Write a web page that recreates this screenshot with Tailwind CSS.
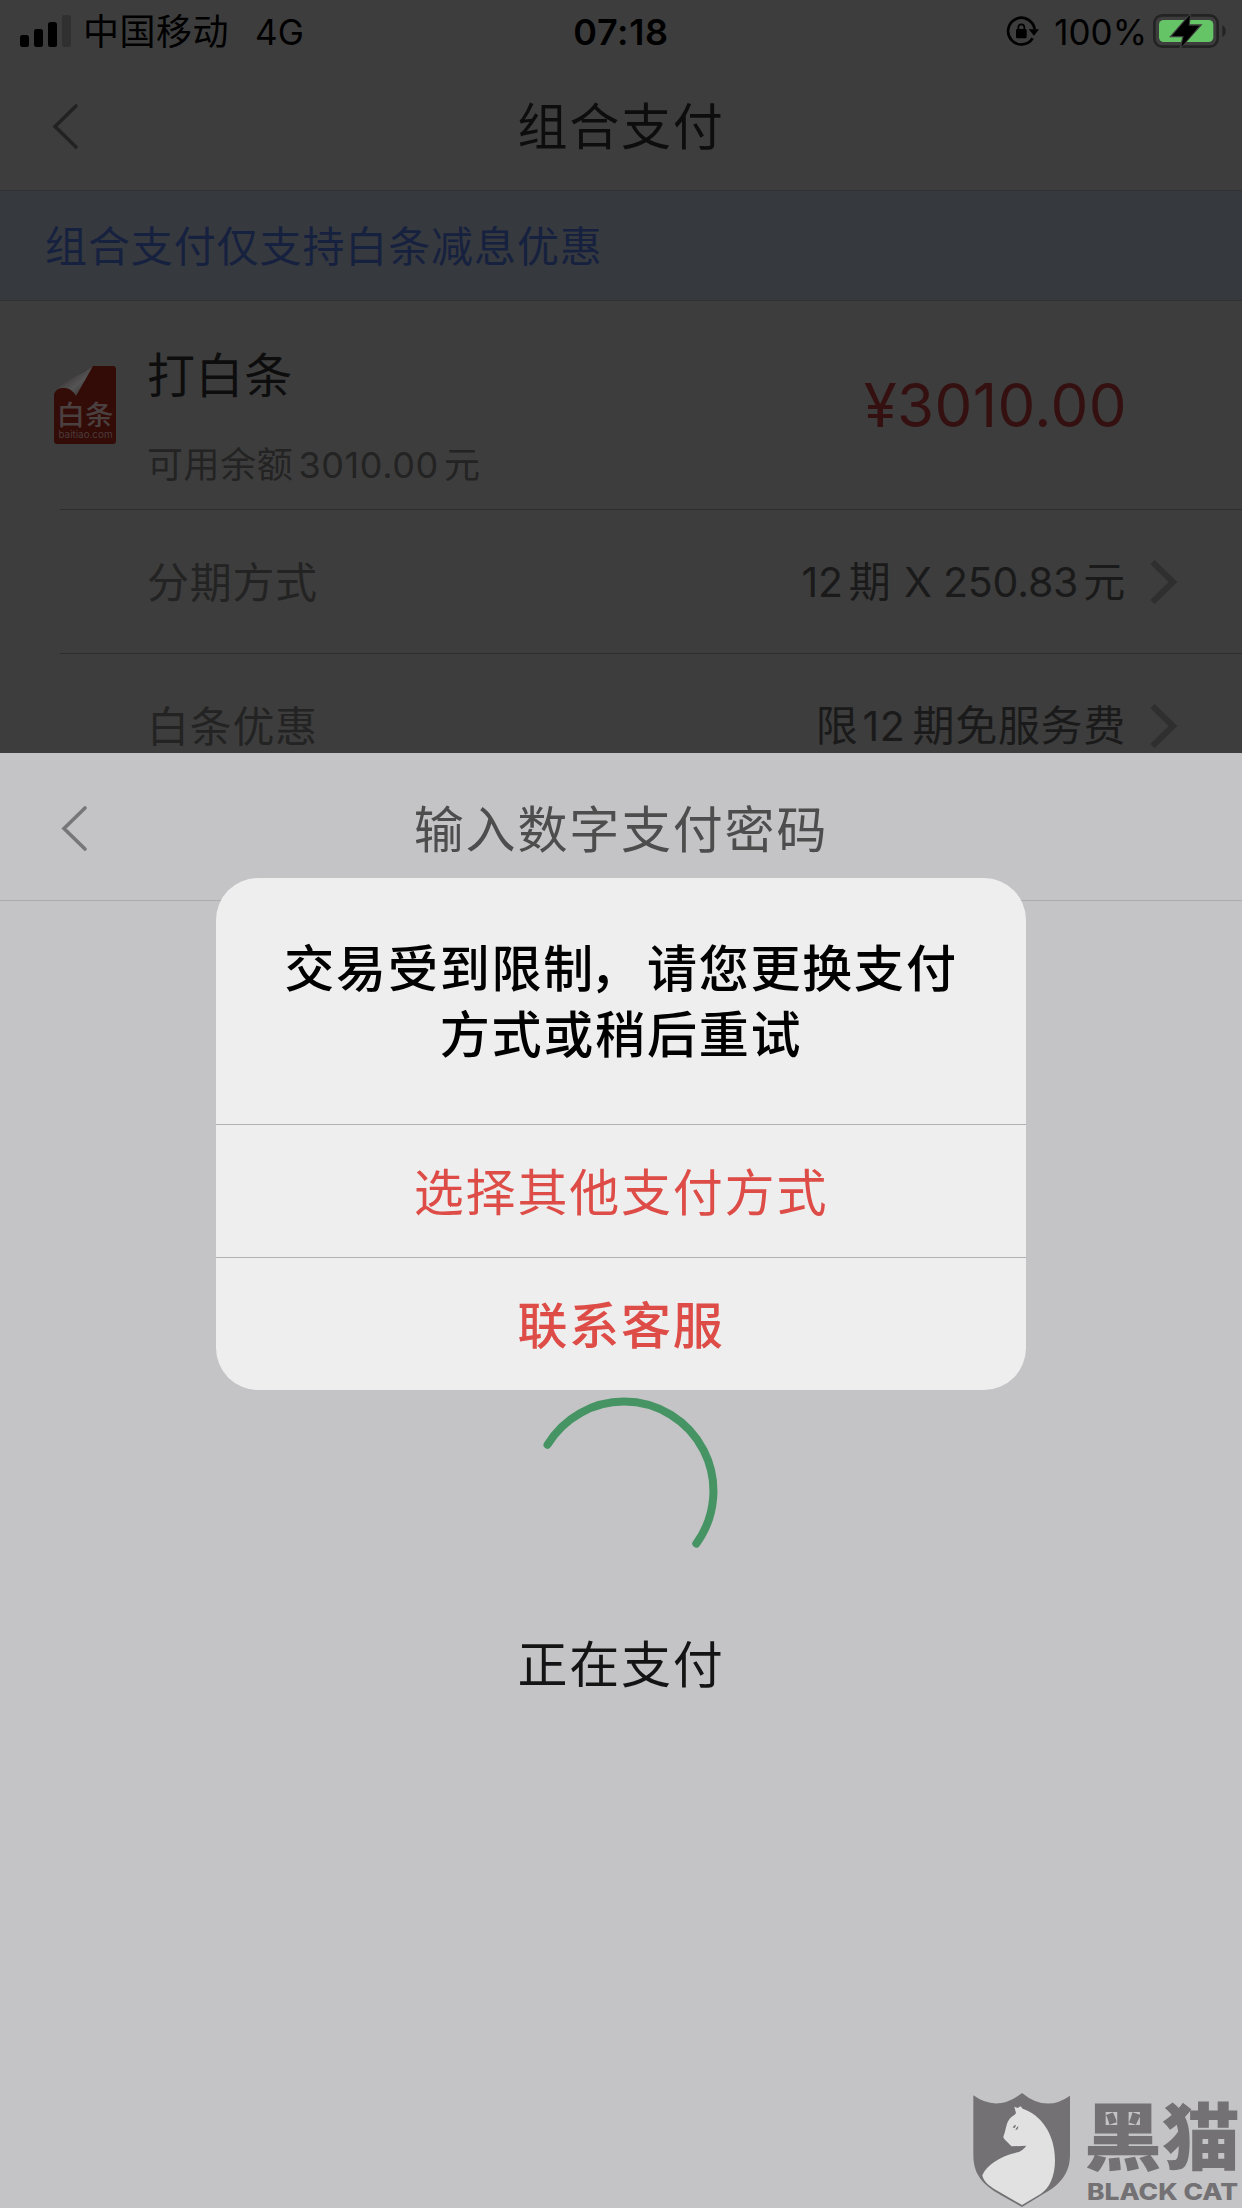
<!DOCTYPE html>
<html lang="zh-CN">
<head>
    <meta charset="UTF-8">
    <meta name="viewport" content="width=device-width, initial-scale=1.0">
    <title>组合支付</title>
    <script src="https://cdn.jsdelivr.net/npm/@tailwindcss/browser@4"></script>
    <style>
        body {
            font-family: 'Inter', 'Noto Sans CJK SC', sans-serif;
            text-autospace: no-autospace;
        }
    </style>
</head>
<body class="bg-[#3d3d3d]">
<div class="relative w-[1242px] h-[2208px] overflow-hidden bg-[#3d3d3d]">

    <!-- Status bar -->
    <div class="grid grid-cols-3 items-center h-[60px] pt-[2px] text-[35px] leading-[58px] text-black">
        <div class="flex items-center pl-5">
            <svg class="w-[51px] h-8 -mt-[2px]" viewBox="0 0 51 32">
                <rect x="0" y="20" width="9" height="12" rx="2.5"/>
                <rect x="14" y="14" width="9" height="18" rx="2.5"/>
                <rect x="28" y="7" width="9" height="25" rx="2.5"/>
                <rect x="42" y="0" width="9" height="32" rx="2.5" fill="#303030"/>
            </svg>
            <span class="ml-[12px] pt-[1px] text-[36px] tracking-[0.5px]">中国移动</span>
            <span class="ml-[26px] pt-[1px]">4G</span>
        </div>
        <div class="pt-[1px] text-center text-[36px] font-semibold tracking-[0.6px]">07:18</div>
        <div class="flex items-center justify-end pr-[15px]">
            <svg class="w-[34px] h-[31px]" viewBox="138 48 102 93">
                <path d="M218 115A40 40 0 1 1 224 88" fill="none" stroke="#000" stroke-width="8"/>
                <path d="M206 88h31l-15 19z"/>
                <rect x="168" y="87" width="32" height="28" rx="4"/>
                <path d="M175 90v-8a9 9 0 0 1 18 0v8" fill="none" stroke="#000" stroke-width="5"/>
            </svg>
            <span class="ml-[14px] pt-[1px]">100%</span>
            <svg class="ml-[5px] -mt-[2px] w-[75px] h-9" viewBox="576 36 225 108">
                <rect x="583" y="43" width="190" height="94" rx="24" fill="none" stroke="#232323" stroke-width="8"/>
                <rect x="597" y="57" width="163" height="66" rx="14" fill="#65c466"/>
                <path d="M787 72q10 6 10 18t-10 18z" fill="#232323"/>
                <path d="M690 42L634 106H671L661 140L721 73H686Z" fill="#3d3d3d" stroke="#3d3d3d" stroke-width="6"/>
                <path d="M690 42L636 105H671L664 138L718 74H686Z" fill="#000"/>
            </svg>
        </div>
    </div>

    <!-- Page header -->
    <div class="relative flex items-center justify-center h-[130px] text-[50px] text-[#0d0d0d]">
        <svg class="absolute left-[52px] top-[43px] w-[27px] h-[47px]" viewBox="0 0 27 47" fill="none" stroke="#222" stroke-width="3.6" stroke-linecap="round"><path d="M24 3L3 23.500L24 44"/></svg>
        <h1 class="pt-[4px] tracking-[1.8px] leading-[130px]">组合支付</h1>
    </div>

    <!-- Notice -->
    <div class="h-[111px] px-[45px] border-y border-[#313131] bg-[#36393e] text-[42px] leading-[112px] tracking-[0.9px] text-[#16213f]">组合支付仅支持白条减息优惠</div>

    <!-- Payment method -->
    <div class="flex h-[208px]">
        <svg class="ml-[53px] mt-[64px] w-[64px] h-[80px] shrink-0" viewBox="0 0 64 80">
            <defs>
                <linearGradient id="fold" x1="0" y1="0" x2="1" y2="1">
                    <stop offset="0.3" stop-color="#3a3535"/>
                    <stop offset="0.6" stop-color="#555"/>
                    <stop offset="1" stop-color="#2a2222"/>
                </linearGradient>
            </defs>
            <path d="M40 1H60Q63 1 63 4V76Q63 79 60 79H4Q1 79 1 76V29Q2 26 5 24Z" fill="#330b07"/>
            <path d="M40 1L23 31Q18 22 10 23Q5 23 2 26Q9 18 18 14Q30 8 40 1Z" fill="url(#fold)"/>
            <text x="3.500" y="60" font-size="27" textLength="57" lengthAdjust="spacingAndGlyphs" font-weight="500" fill="#4b4040" font-family="Noto Sans CJK SC">白条</text>
            <text x="5.500" y="73" font-size="10" textLength="54" lengthAdjust="spacingAndGlyphs" fill="#4b3d3c" font-family="Inter">baitiao.com</text>
        </svg>
        <div class="ml-[30px] flex flex-col">
            <div class="mt-[38px] h-[74px] text-[48px] leading-[74px] tracking-[0.6px] text-[#0d0d0d]">打白条</div>
            <div class="mt-[25px] h-[54px] text-[36px] leading-[54px] tracking-[0.6px] text-[#232323]">可用余额<span class="mx-[5px]">3010.00</span>元</div>
        </div>
        <div class="ml-auto mr-[115px] mt-[57px] text-[60px] leading-[94px] tracking-[0.4px] text-[#351010]">¥3010.00</div>
    </div>
    <div class="ml-[60px] h-[144px] flex items-center border-t border-[#2d2d2d] pl-[87px] pr-[64px] text-[42px] tracking-[0.7px] text-[#1a1a1a]">
        <span class="pt-[2px] text-[#232323]">分期方式</span>
        <span class="ml-auto text-[41px] tracking-[-0.2px]">12<span class="ml-[6px] mr-[2px] text-[42px]">期</span> X <span>250.83</span><span class="ml-[5px] text-[42px]">元</span></span>
        <svg class="ml-[25px] w-[28px] h-[44px]" viewBox="0 0 28 44" fill="none" stroke="#2f2f2f" stroke-width="6"><path d="M2.500 2L23 22L2.500 42"/></svg>
    </div>
    <div class="ml-[60px] h-[144px] flex items-center border-t border-[#2d2d2d] pl-[87px] pr-[64px] text-[42px] tracking-[0.7px] text-[#1a1a1a]">
        <span class="pt-[2px] text-[#232323]">白条优惠</span>
        <span class="ml-auto pt-[1px]">限<span class="ml-[4px] mr-[7px] text-[41px]">12</span>期免服务费</span>
        <svg class="ml-[24px] w-[28px] h-[44px]" viewBox="0 0 28 44" fill="none" stroke="#2f2f2f" stroke-width="6"><path d="M2.500 2L23 22L2.500 42"/></svg>
    </div>

    <!-- Password sheet -->
    <div class="absolute inset-x-0 top-[753px] bottom-0 bg-[#c4c4c6]">
        <div class="relative h-[148px] border-b border-[#adadaf] text-center text-[50px] leading-[154px] tracking-[1.8px] text-[#4d4d4d]">
            <svg class="absolute left-[61px] top-[52px] w-[27px] h-[47px]" viewBox="0 0 27 47" fill="none" stroke="#777779" stroke-width="3.6" stroke-linecap="round"><path d="M24 3L3 23.500L24 44"/></svg>
            输入数字支付密码
        </div>
        <div class="flex flex-col items-center pt-[495px]">
            <svg class="ml-[5px] w-[190px] h-[190px]" viewBox="-95 -95 190 190" fill="none" stroke="#469463" stroke-width="8" stroke-linecap="round"><path d="M-76.500 -46.200A89.400 89.400 0 0 1 0 -89.400A89.400 89.400 0 0 1 72.300 52.600"/></svg>
            <div class="mt-[42px] text-[50px] leading-[74px] tracking-[1.8px] text-[#141414]">正在支付</div>
        </div>
    </div>

    <!-- Alert -->
    <div class="absolute left-[216px] top-[878px] w-[810px] h-[512px] rounded-[42px] overflow-hidden bg-[#eeeeef] text-center text-[50px] tracking-[1.8px] text-[#dd4c46]">
        <div class="h-[246px] pt-[58px] font-medium leading-[66px] text-black">交易受到限制<span class="relative -left-[5px]">，</span>请您更换支付<br>方式或稍后重试</div>
        <div class="h-[133px] border-t border-[#b0b0b3] leading-[136px]">选择其他支付方式</div>
        <div class="h-[133px] border-t border-[#b0b0b3] leading-[136px] font-medium">联系客服</div>
    </div>

    <!-- Watermark -->
    <div class="absolute left-[972px] top-[2092px] flex text-[#737174]">
        <svg class="w-[100px] h-[116px]" viewBox="36 36 300 348">
            <path d="M40 46Q112 98 186 39Q258 98 330 47V225C330 280 300 315 250 342L186 381L122 345C70 315 40 285 40 225Z" fill="#737174"/>
            <path d="M163 80L173 84L182 79L188 86C240 102 285 160 285 240C285 290 268 325 243 341L186 375L104 328C82 314 70 302 67 286C80 255 120 230 165 219C182 215 192 208 199 197L155 199C147 189 130 178 130 170C138 152 138 130 148 118C155 108 165 106 168 99Z" fill="#e1e1e1"/>
            <path d="M158 143q2-8 10-9l-3 9zM175 138q1 10-9 13l3-7z" fill="#737174"/>
        </svg>
        <svg class="ml-[11px] w-[158px] h-[116px]" viewBox="0 0 158 116" fill="#737174">
            <text x="1" y="72" font-family="Noto Sans CJK SC" font-size="73" font-weight="900" textLength="156" lengthAdjust="spacingAndGlyphs">黑猫</text>
            <text x="4" y="108" font-family="Inter" font-size="22.500" font-weight="800" textLength="151" lengthAdjust="spacingAndGlyphs">BLACK CAT</text>
        </svg>
    </div>
</div>
</body>
</html>
